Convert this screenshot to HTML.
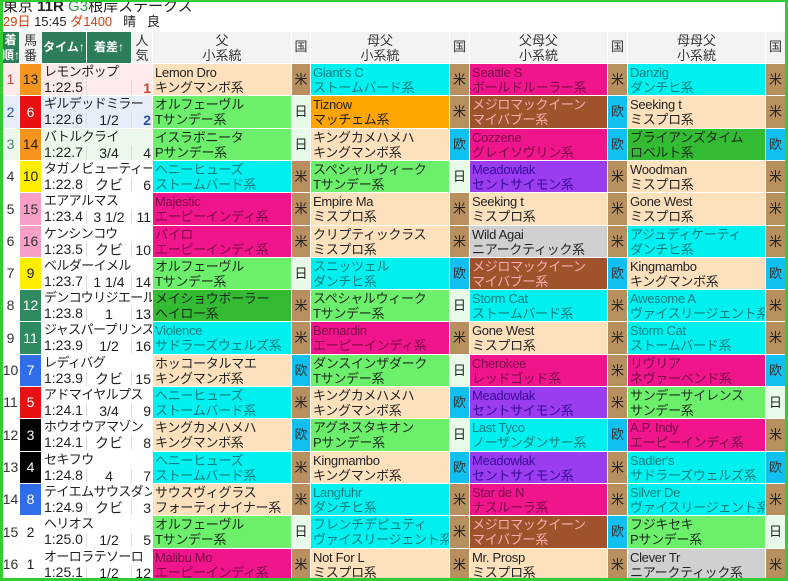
<!DOCTYPE html>
<html><head><meta charset="utf-8">
<style>
*{margin:0;padding:0;box-sizing:border-box}
body{width:788px;height:581px;overflow:hidden;background:#fff;font-family:"Liberation Sans","Noto Sans CJK JP",sans-serif;color:#222;position:relative}
#wrap{position:absolute;left:0;top:0;width:788px;height:581px;border:3px solid #33cc33;border-top-width:2px;z-index:5;pointer-events:none}
#t1{position:absolute;left:3px;top:-1px;font-size:15px;line-height:16px;white-space:nowrap}
#t2{position:absolute;left:3px;top:14px;font-size:13px;line-height:15px;white-space:nowrap}
.c{position:absolute;overflow:hidden;white-space:nowrap;font-size:13px;line-height:15px}
.s{padding:1px 0 0 2px;letter-spacing:-0.3px}
.ct{text-align:center}
.h{background:#f3f3f3;color:#333;text-align:center;padding-top:1px}
.hg{background:#2e7d5a;color:#fff;font-weight:bold;text-align:center}
.P{background:#fde0bc;color:#222}.G{background:#6cf06c;color:#1a2a1a}.C{background:#00f0f0;color:#0c7f80}
.K{background:#f0158c;color:#7a0a48}.B{background:#a0522d;color:#f8b0b0}.V{background:#9a3cf0;color:#3a0a9a}
.Y{background:#d0d0d0;color:#222}.D{background:#33bb33;color:#1a2a1a}.O{background:#ffa500;color:#222}
.us{background:#b89060;color:#222}.eu{background:#10c0f0;color:#333}.jp{background:#e8fae8;color:#222}
</style></head><body>
<div id="wrap"></div>
<div id="t1">東京 <b>11R</b> <span style="color:#2a9a4a">G3</span>根岸ステークス</div>
<div id="t2"><span style="color:#d04010">29日</span> 15:45 <span style="color:#d04010">ダ1400</span> &nbsp;&nbsp;晴 &nbsp;&nbsp;良</div>
<div id="g"></div>
<script>
var X=[2,20,42,153,292,311,450,470,608,628,766,786];
var W={o:["#f7941d","#222"],r:["#e81010","#fff"],y:["#ffee00","#222"],p:["#f8a0c8","#333"],g:["#2e8b60","#fff"],b:["#2f6ee8","#fff"],k:["#000","#fff"],w:["#fff","#222"]};
var R=[
[1,13,"o","レモンポップ","1:22.5","","1","Lemon Dro","キングマンボ系","P","us","Giant's C","ストームバード系","C","us","Seattle S","ボールドルーラー系","K","us","Danzig","ダンチヒ系","C","us"],
[2,6,"r","ギルデッドミラー","1:22.6","1/2","2","オルフェーヴル","Tサンデー系","G","jp","Tiznow","マッチェム系","O","us","メジロマックイーン","マイバブー系","B","eu","Seeking t","ミスプロ系","P","us"],
[3,14,"o","バトルクライ","1:22.7","3/4","4","イスラボニータ","Pサンデー系","G","jp","キングカメハメハ","キングマンボ系","P","eu","Cozzene","グレイソヴリン系","K","eu","ブライアンズタイム","ロベルト系","D","eu"],
[4,10,"y","タガノビューティー","1:22.8","クビ","6","ヘニーヒューズ","ストームバード系","C","us","スペシャルウィーク","Tサンデー系","G","jp","Meadowlak","セントサイモン系","V","us","Woodman","ミスプロ系","P","us"],
[5,15,"p","エアアルマス","1:23.4","3 1/2","11","Majestic","エーピーインディ系","K","us","Empire Ma","ミスプロ系","P","us","Seeking t","ミスプロ系","P","us","Gone West","ミスプロ系","P","us"],
[6,16,"p","ケンシンコウ","1:23.5","クビ","10","パイロ","エーピーインディ系","K","us","クリプティックラス","ミスプロ系","P","us","Wild Agai","ニアークティック系","Y","us","アジュディケーティ","ダンチヒ系","C","us"],
[7,9,"y","ベルダーイメル","1:23.7","1 1/4","14","オルフェーヴル","Tサンデー系","G","jp","スニッツェル","ダンチヒ系","C","eu","メジロマックイーン","マイバブー系","B","eu","Kingmambo","キングマンボ系","P","eu"],
[8,12,"g","デンコウリジエール","1:23.8","1","13","メイショウボーラー","ヘイロー系","D","us","スペシャルウィーク","Tサンデー系","G","jp","Storm Cat","ストームバード系","C","us","Awesome A","ヴァイスリージェント系","C","us"],
[9,11,"g","ジャスパープリンス","1:23.9","1/2","16","Violence","サドラーズウェルズ系","C","us","Bernardin","エーピーインディ系","K","us","Gone West","ミスプロ系","P","us","Storm Cat","ストームバード系","C","us"],
[10,7,"b","レディバグ","1:23.9","クビ","15","ホッコータルマエ","キングマンボ系","P","eu","ダンスインザダーク","Tサンデー系","G","jp","Cherokee","レッドゴッド系","K","us","リヴリア","ネヴァーベンド系","K","eu"],
[11,5,"r","アドマイヤルプス","1:24.1","3/4","9","ヘニーヒューズ","ストームバード系","C","us","キングカメハメハ","キングマンボ系","P","eu","Meadowlak","セントサイモン系","V","us","サンデーサイレンス","サンデー系","G","jp"],
[12,3,"k","ホウオウアマゾン","1:24.1","クビ","8","キングカメハメハ","キングマンボ系","P","eu","アグネスタキオン","Pサンデー系","G","jp","Last Tyco","ノーザンダンサー系","C","eu","A.P. Indy","エーピーインディ系","K","us"],
[13,4,"k","セキフウ","1:24.8","4","7","ヘニーヒューズ","ストームバード系","C","us","Kingmambo","キングマンボ系","P","eu","Meadowlak","セントサイモン系","V","us","Sadler's","サドラーズウェルズ系","C","eu"],
[14,8,"b","テイエムサウスダン","1:24.9","クビ","3","サウスヴィグラス","フォーティナイナー系","P","us","Langfuhr","ダンチヒ系","C","us","Star de N","ナスルーラ系","K","us","Silver De","ヴァイスリージェント系","C","us"],
[15,2,"w","ヘリオス","1:25.0","1/2","5","オルフェーヴル","Tサンデー系","G","jp","フレンチデピュティ","ヴァイスリージェント系","C","us","メジロマックイーン","マイバブー系","B","eu","フジキセキ","Pサンデー系","G","jp"],
[16,1,"w","オーロラテソーロ","1:25.1","1/2","12","Malibu Mo","エーピーインディ系","K","us","Not For L","ミスプロ系","P","us","Mr. Prosp","ミスプロ系","P","us","Clever Tr","ニアークティック系","Y","us"]];
var bg=["#fdeaea","#e6eefa","#ecf8ec"],rc=["#c04a30","#2f50a8","#4f8070"];
var CN={us:"米",eu:"欧",jp:"日"};
var h="";
function cell(x,y,w,ht,cls,st,txt){h+='<div class="c '+cls+'" style="left:'+x+'px;top:'+y+'px;width:'+w+'px;height:'+ht+'px;'+st+'">'+txt+'</div>';}
var hy=32,hh=31;
cell(X[0],hy,X[1]-X[0]-1,hh,"hg","font-size:12px;line-height:15px;padding-top:1px","着<br>順↑");
cell(X[1],hy,X[2]-X[1]-1,hh,"h","","馬<br>番");
cell(42,hy,44,hh,"hg","line-height:31px;font-size:12px","タイム↑");
cell(87,hy,44,hh,"hg","line-height:31px;font-size:12px","着差↑");
cell(132,hy,20,hh,"h","","人<br>気");
var hn=["父","国","母父","国","父母父","国","母母父","国"];
for(var k=0;k<8;k++){var x=X[3+k],w=X[4+k]-x-1;cell(x,hy,w,hh,"h",k%2?"line-height:29px;padding:0":"",k%2?"国":hn[k]+"<br>小系統");}
R.forEach(function(r,i){
 var y=Math.round(64+i*32.3),ht=Math.round(64+(i+1)*32.3)-y-1;
 var b=i<3?bg[i]:"#fff";
 cell(X[0],y,X[1]-X[0]-1,ht,"ct","background:"+b+";color:"+(i<3?rc[i]:"#333")+";font-size:14px;line-height:"+ht+"px",r[0]);
 cell(X[1],y,X[2]-X[1]-1,ht,"ct","background:"+W[r[2]][0]+";color:"+W[r[2]][1]+";font-size:14px;line-height:"+ht+"px",r[1]);
 var pc=i==0?"color:#c04a30;font-weight:bold;":(i==1?"color:#2f50a8;font-weight:bold;":"");
 cell(42,y,110,ht,"","background:"+b,
  '<span style="position:absolute;left:2px;top:0;letter-spacing:-0.6px">'+r[3]+'</span>'+
  '<span style="position:absolute;left:2px;top:16px;font-size:14px">'+r[4]+'</span>'+
  '<span style="position:absolute;left:44px;top:17px;width:45px;height:14px;border-left:1px solid #ddd;text-align:center;font-size:14px;line-height:14px">'+r[5]+'</span>'+
  '<span style="position:absolute;left:89px;top:17px;width:21px;height:14px;border-left:1px solid #ddd;text-align:right;padding-right:1px;font-size:14px;line-height:14px;'+pc+'">'+r[6]+'</span>');
 for(var k=0;k<4;k++){var j=7+k*4,x=X[3+k*2],w=X[4+k*2]-x-1,x2=X[4+k*2],w2=X[5+k*2]-x2-1;
  cell(x,y,w,ht,"s "+r[j+2],"",r[j]+"<br>"+r[j+1]);
  cell(x2,y,w2,ht,"ct "+r[j+3],"line-height:"+ht+"px",CN[r[j+3]]);}
});
document.getElementById("g").innerHTML=h;
</script>
</body></html>
